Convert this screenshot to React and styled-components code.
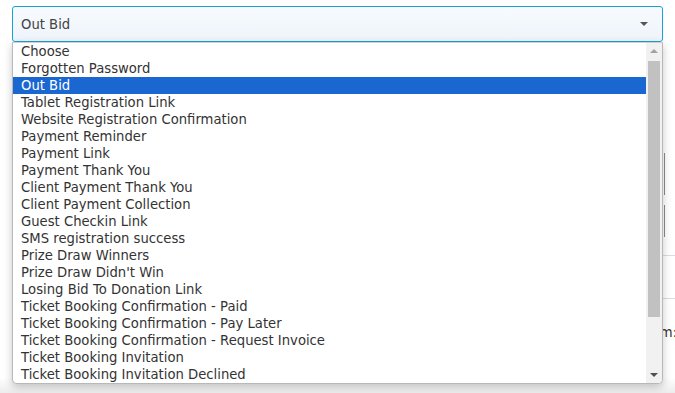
import React from "react";
import styled, { createGlobalStyle } from "styled-components";

const options = [
  "Choose",
  "Forgotten Password",
  "Out Bid",
  "Tablet Registration Link",
  "Website Registration Confirmation",
  "Payment Reminder",
  "Payment Link",
  "Payment Thank You",
  "Client Payment Thank You",
  "Client Payment Collection",
  "Guest Checkin Link",
  "SMS registration success",
  "Prize Draw Winners",
  "Prize Draw Didn't Win",
  "Losing Bid To Donation Link",
  "Ticket Booking Confirmation - Paid",
  "Ticket Booking Confirmation - Pay Later",
  "Ticket Booking Confirmation - Request Invoice",
  "Ticket Booking Invitation",
  "Ticket Booking Invitation Declined",
];

const GlobalStyle = createGlobalStyle`
  html, body {
    margin: 0;
    padding: 0;
    background: #ffffff;
    font-family: "DejaVu Sans", "Liberation Sans", sans-serif;
    overflow: hidden;
  }
`;

const Page = styled.div`
  position: relative;
  width: 675px;
  height: 393px;
  padding: 6px 12px 0 12px;
  box-sizing: border-box;
  background: linear-gradient(#ffffff 0%, #ffffff 96%, #ececec 100%);
`;

const Field = styled.div`
  position: relative;
  width: 651px;
`;

const SelectBox = styled.div`
  height: 36px;
  box-sizing: border-box;
  border: 1px solid #1aa0d8;
  border-radius: 3px;
  background: linear-gradient(#f7fbff, #eef4fa);
  display: flex;
  align-items: center;
  justify-content: space-between;
  padding: 0 14px 0 8px;
  font-size: 13.2px;
  color: #444;
`;

const Caret = styled.span`
  width: 0;
  height: 0;
  border-left: 4px solid transparent;
  border-right: 4px solid transparent;
  border-top: 4px solid #555;
`;

const Behind = styled.div`
  display: flex;
  flex-direction: column;
  margin-top: 111px;
`;

const GhostInput = styled.div`
  width: 652px;
  height: ${(p) => p.$h}px;
  margin-bottom: ${(p) => p.$gap}px;
  border-right: 1px solid #8a8a8a;
`;

const Divider = styled.div`
  width: 663px;
  height: ${(p) => p.$h}px;
  border-bottom: 1px solid #dcdce8;
`;

const GhostLabel = styled.div`
  margin-top: 26px;
  margin-left: 628px;
  font-size: 13.2px;
  color: #333;
  white-space: nowrap;
`;

const List = styled.div`
  position: absolute;
  top: 36px;
  left: 0;
  width: 651px;
  height: 342px;
  box-sizing: border-box;
  border: 1px solid #b8b8b8;
  border-top: 1px solid #d0d0d0;
  border-radius: 0 0 5px 5px;
  background: #fff;
  box-shadow: 0 3px 8px rgba(0, 0, 0, 0.22);
  display: flex;
  overflow: hidden;
`;

const Options = styled.div`
  flex: 1;
  display: flex;
  flex-direction: column;
`;

const Option = styled.div`
  height: 17px;
  line-height: 17px;
  padding-left: 8px;
  font-size: 13.2px;
  white-space: nowrap;
  color: ${(p) => (p.$active ? "#ffffff" : "#333333")};
  background: ${(p) => (p.$active ? "#1a67d2" : "transparent")};
`;

const Scrollbar = styled.div`
  width: 16px;
  background: #f1f1f1;
  display: flex;
  flex-direction: column;
  align-items: center;
`;

const Arrow = styled.div`
  height: 16px;
  display: flex;
  align-items: center;
  justify-content: center;
`;

const ArrowShape = styled.span`
  width: 0;
  height: 0;
  border-left: 4px solid transparent;
  border-right: 4px solid transparent;
  ${(p) =>
    p.$up ? "border-bottom: 4px solid #a3a3a3;" : "border-top: 4px solid #505050;"}
`;

const Thumb = styled.div`
  width: 12px;
  height: 256px;
  margin-top: 2px;
  background: #c1c1c1;
`;

const Rest = styled.div`
  flex: 1;
`;

export default function App() {
  return (
    <>
      <GlobalStyle />
      <Page>
        <Field>
          <SelectBox>
            <span>Out Bid</span>
            <Caret />
          </SelectBox>
          <Behind>
            <GhostInput $h={42} $gap={10} />
            <GhostInput $h={32} $gap={0} />
            <Divider $h={18} />
            <Divider $h={42} />
          </Behind>
          <GhostLabel>From:</GhostLabel>
          <List>
            <Options>
              {options.map((o) => (
                <Option key={o} $active={o === "Out Bid"}>
                  {o}
                </Option>
              ))}
            </Options>
            <Scrollbar>
              <Arrow>
                <ArrowShape $up />
              </Arrow>
              <Thumb />
              <Rest />
              <Arrow>
                <ArrowShape />
              </Arrow>
            </Scrollbar>
          </List>
        </Field>
      </Page>
    </>
  );
}
